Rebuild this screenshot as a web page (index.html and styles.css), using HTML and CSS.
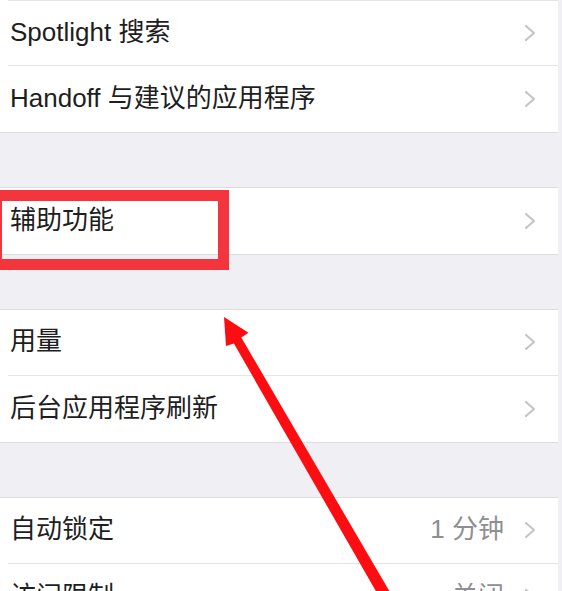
FILE: index.html
```html
<!DOCTYPE html>
<html lang="zh-CN">
<head>
<meta charset="utf-8">
<title>设置</title>
<link rel="stylesheet" href="styles.css">
</head>
<body>
<div class="page">
  <div class="group first">
    <div class="row top-sep">
      <span class="label">Spotlight 搜索</span>
      <svg class="chev" viewBox="0 0 12 18" width="12" height="18"><polyline points="2,2 10,9 2,16"/></svg>
    </div>
    <div class="row">
      <span class="label">Handoff 与建议的应用程序</span>
      <svg class="chev" viewBox="0 0 12 18" width="12" height="18"><polyline points="2,2 10,9 2,16"/></svg>
    </div>
  </div>
  <div class="group">
    <div class="row">
      <span class="label">辅助功能</span>
      <svg class="chev" viewBox="0 0 12 18" width="12" height="18"><polyline points="2,2 10,9 2,16"/></svg>
    </div>
  </div>
  <div class="group">
    <div class="row">
      <span class="label">用量</span>
      <svg class="chev" viewBox="0 0 12 18" width="12" height="18"><polyline points="2,2 10,9 2,16"/></svg>
    </div>
    <div class="row">
      <span class="label">后台应用程序刷新</span>
      <svg class="chev" viewBox="0 0 12 18" width="12" height="18"><polyline points="2,2 10,9 2,16"/></svg>
    </div>
  </div>
  <div class="group">
    <div class="row">
      <span class="label">自动锁定</span>
      <span class="value">1 分钟</span>
      <svg class="chev" viewBox="0 0 12 18" width="12" height="18"><polyline points="2,2 10,9 2,16"/></svg>
    </div>
    <div class="row">
      <span class="label">访问限制</span>
      <span class="value">关闭</span>
      <svg class="chev" viewBox="0 0 12 18" width="12" height="18"><polyline points="2,2 10,9 2,16"/></svg>
    </div>
  </div>

  <div class="highlight"></div>
  <svg class="arrow" viewBox="0 0 562 591" width="562" height="591">
    <polygon points="224,317 248.5,332.8 241.3,337.6 398.6,606.9 388.4,612.9 233.9,343.6 226,346"/>
  </svg>
</div>
</body>
</html>
```

FILE: styles.css
```css
html, body {
  margin: 0;
  padding: 0;
}
body {
  background: #efeff4;
  font-family: "Liberation Sans", "Noto Sans CJK SC", sans-serif;
  overflow: hidden;
}
.page {
  position: relative;
  width: 562px;
  height: 591px;
  overflow: hidden;
}
.group {
  background: #ffffff;
  margin-right: 4px;
  margin-top: 54px;
  border-top: 1px solid #dcdce1;
  border-bottom: 1px solid #dcdce1;
}
.group.first {
  margin-top: 0;
  border-top: none;
}
.row {
  height: 66px;
  box-sizing: border-box;
  margin-left: 8px;
  padding-left: 2px;
  padding-right: 22px;
  padding-bottom: 3px;
  display: flex;
  align-items: center;
  border-bottom: 1px solid #e3e3e8;
}
.row:last-child {
  height: 66px;
  border-bottom: none;
}
.row.top-sep {
  height: 66px;
  border-top: 1px solid #e6e6ea;
  border-bottom: 1px solid #e3e3e8;
}
.label {
  flex: 1;
  font-size: 26px;
  line-height: 30px;
  color: #1e1e1e;
  white-space: nowrap;
}
.value {
  font-size: 26px;
  line-height: 30px;
  color: #8e8e93;
  margin-right: 20px;
  white-space: nowrap;
}
.chev {
  display: block;
  flex: none;
  margin-top: 2px;
}
.chev polyline {
  fill: none;
  stroke: #c4c4c9;
  stroke-width: 2.2;
  stroke-linecap: round;
  stroke-linejoin: round;
}
.highlight {
  position: absolute;
  left: -9px;
  top: 190px;
  width: 238px;
  height: 80px;
  box-sizing: border-box;
  border: 11px solid #f3353e;
}
.arrow {
  position: absolute;
  left: 0;
  top: 0;
}
.arrow polygon {
  fill: #fb0d12;
}
```
